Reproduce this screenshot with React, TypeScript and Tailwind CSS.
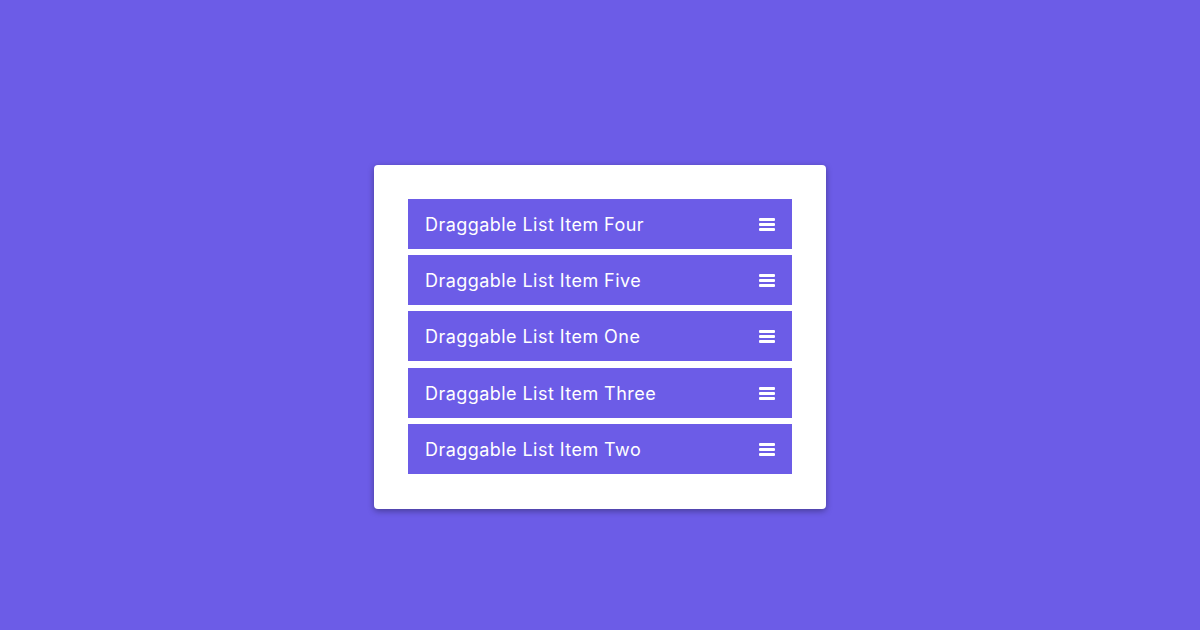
import React from "react";

const items = [
  "Draggable List Item Four",
  "Draggable List Item Five",
  "Draggable List Item One",
  "Draggable List Item Three",
  "Draggable List Item Two",
];

function Bars() {
  return (
    <svg width="16" height="14" viewBox="0 0 16 14" fill="#fff">
      <rect x="0" y="1" width="16" height="3" rx="1" />
      <rect x="0" y="6" width="16" height="3" rx="1" />
      <rect x="0" y="11" width="16" height="3" rx="1" />
    </svg>
  );
}

export default function App() {
  return (
    <div
      className="flex h-[630px] w-full justify-center bg-[#6c5ce7] pt-[165px]"
      style={{ fontFamily: "Inter, 'Noto Sans', sans-serif" }}
    >
      <div className="h-[344px] w-[452px] rounded-[4px] bg-white px-[34px] pt-[34px] shadow-[0_2px_6px_rgba(0,0,0,0.35)]">
        <ul className="flex flex-col gap-[6px]">
          {items.map((it, i) => (
            <li
              key={it}
              className={
                "flex h-[50px] cursor-move items-center justify-between bg-[#6c5ce7] px-[17px] text-[18px] font-normal tracking-[0.45px] text-white" +
                (i === 3 ? " mt-[1px]" : "")
              }
            >
              <span>{it}</span>
              <Bars />
            </li>
          ))}
        </ul>
      </div>
    </div>
  );
}
